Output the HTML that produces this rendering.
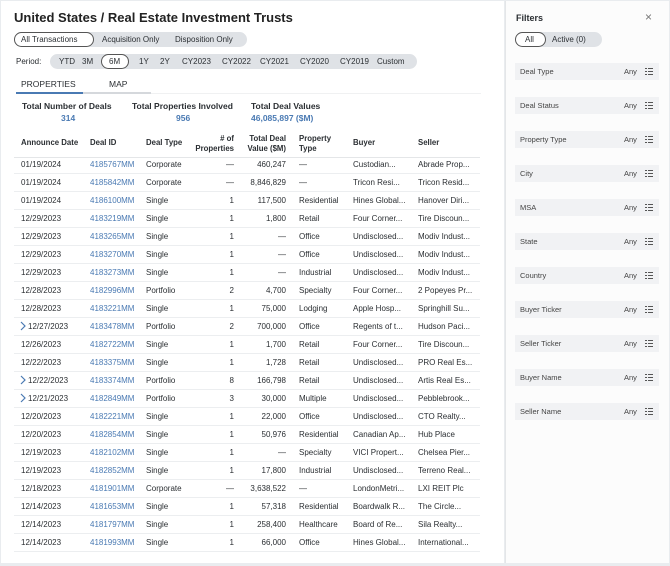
<!DOCTYPE html>
<html><head><meta charset="utf-8"><style>
*{margin:0;padding:0;box-sizing:border-box}
body{width:670px;height:566px;background:#e9ecef;font-family:"Liberation Sans",sans-serif;color:#2b2f33;position:relative;overflow:hidden;font-size:8px}
.a{position:absolute;white-space:nowrap}
#main{position:absolute;left:1px;top:1px;width:503px;height:562px;background:#fff}
#side{position:absolute;left:505px;top:1px;width:164px;height:562px;background:#fcfcfc;border-left:1px solid #e4e6e8}
.pill{position:absolute;background:#dfe2e6;border-radius:9px;height:15px}
.on{position:absolute;background:#fff;border:1px solid #555;border-radius:9px;height:15px}
.lk{color:#4a7ab3}
.b{font-weight:bold}
.line{position:absolute;left:14px;width:466px;height:1px;background:#eceef0}
.f{position:absolute;left:10px;width:144px;height:17px;background:#f1f2f4;font-size:7.5px;color:#444}
.ic{position:absolute;right:6px;top:5px;width:8px;height:7px;background:repeating-linear-gradient(#555 0 1px,transparent 1px 3px)}
.ic:before{content:"";position:absolute;left:2px;top:0;width:1px;height:7px;background:#f1f2f4}
#rows .a{font-size:8px}
</style></head><body>
<div id="main"></div>
<div class="a b" style="left:14px;top:10px;font-size:13px;color:#222">United States / Real Estate Investment Trusts</div>
<div class="pill" style="left:14px;top:32px;width:233px"></div>
<div class="on" style="left:14px;top:32px;width:80px"></div>
<div class="a" style="left:21px;top:35px">All Transactions</div>
<div class="a" style="left:102px;top:35px">Acquisition Only</div>
<div class="a" style="left:175px;top:35px">Disposition Only</div>
<div class="a" style="left:16px;top:57px">Period:</div>
<div class="pill" style="left:50px;top:54px;width:367px"></div>
<div class="on" style="left:101px;top:54px;width:28px"></div>
<div class="a" style="left:59px;top:57px">YTD</div><div class="a" style="left:82px;top:57px">3M</div>
<div class="a" style="left:109px;top:57px">6M</div><div class="a" style="left:139px;top:57px">1Y</div>
<div class="a" style="left:160px;top:57px">2Y</div><div class="a" style="left:182px;top:57px">CY2023</div>
<div class="a" style="left:222px;top:57px">CY2022</div><div class="a" style="left:260px;top:57px">CY2021</div>
<div class="a" style="left:300px;top:57px">CY2020</div><div class="a" style="left:340px;top:57px">CY2019</div>
<div class="a" style="left:377px;top:57px">Custom</div>
<div class="a" style="left:21px;top:79px;font-size:8.5px">PROPERTIES</div>
<div class="a" style="left:109px;top:79px;font-size:8.5px">MAP</div>
<div class="a" style="left:16px;top:92px;width:67px;height:2px;background:#4a7ab3"></div>
<div class="a" style="left:83px;top:92px;width:68px;height:2px;background:#d5d8dc"></div>
<div class="a" style="left:151px;top:93px;width:330px;height:1px;background:#f0f1f2"></div>
<div class="a b" style="left:22px;top:101px;font-size:8.5px">Total Number of Deals</div>
<div class="a b lk" style="left:61px;top:113px;font-size:8.5px">314</div>
<div class="a b" style="left:132px;top:101px;font-size:8.5px">Total Properties Involved</div>
<div class="a b lk" style="left:176px;top:113px;font-size:8.5px">956</div>
<div class="a b" style="left:251px;top:101px;font-size:8.5px">Total Deal Values</div>
<div class="a b lk" style="left:251px;top:113px;font-size:8.5px">46,085,897 ($M)</div>
<div class="a b" style="left:21px;top:138px;font-size:7.8px">Announce Date</div>
<div class="a b" style="left:90px;top:138px;font-size:7.8px">Deal ID</div>
<div class="a b" style="left:146px;top:138px;font-size:7.8px">Deal Type</div>
<div class="a b" style="left:184px;top:134px;width:50px;text-align:right;font-size:7.8px;line-height:10px">#&nbsp;of<br>Properties</div>
<div class="a b" style="left:236px;top:134px;width:50px;text-align:right;font-size:7.8px;line-height:10px">Total Deal<br>Value ($M)</div>
<div class="a b" style="left:299px;top:134px;font-size:7.8px;line-height:10px">Property<br>Type</div>
<div class="a b" style="left:353px;top:138px;font-size:7.8px">Buyer</div>
<div class="a b" style="left:418px;top:138px;font-size:7.8px">Seller</div>
<div class="line" style="top:157px;background:#e4e6e8"></div>
<div id="rows"></div>
<div id="side"></div>
<div class="a b" style="left:516px;top:13px;font-size:9px">Filters</div>
<div class="a" style="left:645px;top:10px;font-size:12px;color:#777">×</div>
<div class="pill" style="left:515px;top:32px;width:87px"></div>
<div class="on" style="left:515px;top:32px;width:31px"></div>
<div class="a" style="left:525px;top:35px">All</div>
<div class="a" style="left:552px;top:35px">Active (0)</div>
<div id="filt"></div>
<script>
var R=[
["01/19/2024","4185767MM","Corporate","—","460,247","—","Custodian...","Abrade Prop..."],
["01/19/2024","4185842MM","Corporate","—","8,846,829","—","Tricon Resi...","Tricon Resid..."],
["01/19/2024","4186100MM","Single","1","117,500","Residential","Hines Global...","Hanover Diri..."],
["12/29/2023","4183219MM","Single","1","1,800","Retail","Four Corner...","Tire Discoun..."],
["12/29/2023","4183265MM","Single","1","—","Office","Undisclosed...","Modiv Indust..."],
["12/29/2023","4183270MM","Single","1","—","Office","Undisclosed...","Modiv Indust..."],
["12/29/2023","4183273MM","Single","1","—","Industrial","Undisclosed...","Modiv Indust..."],
["12/28/2023","4182996MM","Portfolio","2","4,700","Specialty","Four Corner...","2 Popeyes Pr..."],
["12/28/2023","4183221MM","Single","1","75,000","Lodging","Apple Hosp...","Springhill Su..."],
[">12/27/2023","4183478MM","Portfolio","2","700,000","Office","Regents of t...","Hudson Paci..."],
["12/26/2023","4182722MM","Single","1","1,700","Retail","Four Corner...","Tire Discoun..."],
["12/22/2023","4183375MM","Single","1","1,728","Retail","Undisclosed...","PRO Real Es..."],
[">12/22/2023","4183374MM","Portfolio","8","166,798","Retail","Undisclosed...","Artis Real Es..."],
[">12/21/2023","4182849MM","Portfolio","3","30,000","Multiple","Undisclosed...","Pebblebrook..."],
["12/20/2023","4182221MM","Single","1","22,000","Office","Undisclosed...","CTO Realty..."],
["12/20/2023","4182854MM","Single","1","50,976","Residential","Canadian Ap...","Hub Place"],
["12/19/2023","4182102MM","Single","1","—","Specialty","VICI Propert...","Chelsea Pier..."],
["12/19/2023","4182852MM","Single","1","17,800","Industrial","Undisclosed...","Terreno Real..."],
["12/18/2023","4181901MM","Corporate","—","3,638,522","—","LondonMetri...","LXI REIT Plc"],
["12/14/2023","4181653MM","Single","1","57,318","Residential","Boardwalk R...","The Circle..."],
["12/14/2023","4181797MM","Single","1","258,400","Healthcare","Board of Re...","Sila Realty..."],
["12/14/2023","4181993MM","Single","1","66,000","Office","Hines Global...","International..."]];
var h="";
R.forEach(function(r,i){var y=160+18*i;var d=r[0];
if(d[0]==">"){d=d.slice(1);h+='<svg class="a" style="left:20px;top:'+(y-1)+'px" width="6" height="10" viewBox="0 0 6 10"><path d="M1 1 L5 5 L1 9" fill="none" stroke="#4a7ab3" stroke-width="1.2"/></svg>';h+='<div class="a" style="left:28px;top:'+y+'px">'+d+'</div>';}
else h+='<div class="a" style="left:21px;top:'+y+'px">'+d+'</div>';
h+='<div class="a lk" style="left:90px;top:'+y+'px">'+r[1]+'</div>';
h+='<div class="a" style="left:146px;top:'+y+'px">'+r[2]+'</div>';
h+='<div class="a" style="left:200px;width:34px;text-align:right;top:'+y+'px">'+r[3]+'</div>';
h+='<div class="a" style="left:236px;width:50px;text-align:right;top:'+y+'px">'+r[4]+'</div>';
h+='<div class="a" style="left:299px;top:'+y+'px">'+r[5]+'</div>';
h+='<div class="a" style="left:353px;top:'+y+'px">'+r[6]+'</div>';
h+='<div class="a" style="left:418px;top:'+y+'px">'+r[7]+'</div>';
h+='<div class="line" style="top:'+(y+13)+'px"></div>';});
document.getElementById("rows").innerHTML=h;
var F=["Deal Type","Deal Status","Property Type","City","MSA","State","Country","Buyer Ticker","Seller Ticker","Buyer Name","Seller Name"],g="";
F.forEach(function(f,i){var y=63+34*i;g+='<div class="f" style="left:515px;top:'+y+'px"><span class="a" style="left:5px;top:4px">'+f+'</span><span class="a" style="left:109px;top:4px">Any</span><span class="ic"></span></div>';});
document.getElementById("filt").innerHTML=g;
</script>
</body></html>
